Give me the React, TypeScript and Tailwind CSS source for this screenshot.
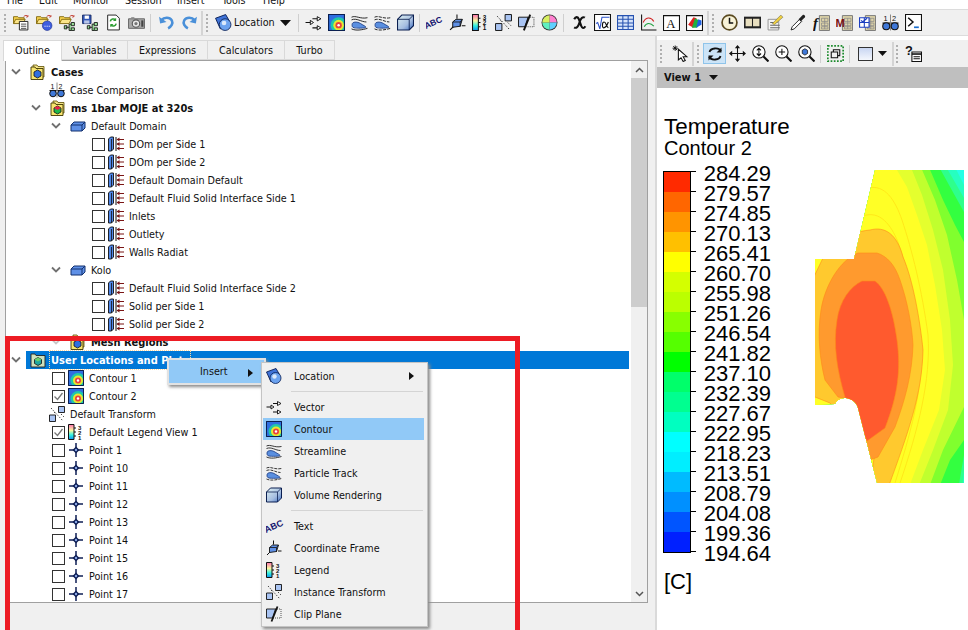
import type { ReactNode } from 'react';

const ui = 'font-["DejaVu_Sans_Condensed","DejaVu_Sans",sans-serif] [font-stretch:condensed] text-[10.7px] text-[#111]';

type SvgProps = { children: ReactNode; w?: number; h?: number };
function G({ children, w = 16, h = 16 }: SvgProps) {
  return (
    <svg width={w} height={h} viewBox="0 0 16 16" fill="none" className="block shrink-0">
      {children}
    </svg>
  );
}

const Folder = () => (
  <>
    <path d="M0.500 9V2.500h4l1 1h5v2" fill="#f6d24f" stroke="#7a6000" strokeWidth=".8" />
    <path d="M0.500 9l2-4h9l-2 4z" fill="#fbe58a" stroke="#7a6000" strokeWidth=".8" />
    <path d="M10 2.500c1.500-1.500 3-1.500 4 0l-1.500 0.500M14 2.500v-1.500" stroke="#c0392b" strokeWidth=".9" />
  </>
);
const Nodes = () => (
  <path d="M6.500 12.500h3m2-3h-2v6h2M5 11h2.500v3H5zM11.500 8h3v3h-3zM11.500 13h3v2.500h-3z" fill="#9be29b" stroke="#111" strokeWidth=".8" />
);
const OpenDoc = () => (
  <G>
    <Folder />
    <path d="M6 7h8v8H6z" fill="#fff" stroke="#222" strokeWidth=".9" />
    <path d="M7.500 9.500h5M7.500 11.500h5M7.500 13.500h5" stroke="#333" strokeWidth=".8" />
  </G>
);
const OpenCircle = () => (
  <G>
    <Folder />
    <circle cx="10.500" cy="11" r="4.500" fill="#3f5fe0" stroke="#1c2f90" strokeWidth=".6" />
    <path d="M8 11.500h5" stroke="#fff" strokeWidth=".9" strokeDasharray="1 1" />
  </G>
);
const OpenNodes = () => (
  <G>
    <Folder />
    <Nodes />
  </G>
);
const SaveNodes = () => (
  <G>
    <path d="M0.500 1h8v8h-8z" fill="#3459b8" stroke="#12245e" strokeWidth=".8" />
    <path d="M2.500 1.500h4v3h-4z" fill="#fff" />
    <path d="M2 6h5v3H2z" fill="#b9c6e8" />
    <Nodes />
  </G>
);
const RefreshDoc = () => (
  <G>
    <path d="M2.500 1h8l3 3v11h-11z" fill="#fff" stroke="#222" strokeWidth=".9" />
    <path d="M5 7c.5-2.500 3.500-3 5-1.500M10.500 9c-.5 2.500-3.500 3-5 1.500" stroke="#2f9e35" strokeWidth="1.500" />
    <path d="M10.500 3.500v3h-3zM5 12.500v-3h3z" fill="#2f9e35" />
  </G>
);
const Camera = () => (
  <G>
    <path d="M0.500 4.500h15v9h-15z" fill="#a8a8a8" stroke="#666" strokeWidth=".9" />
    <path d="M3 3h3v1.500H3z" fill="#888" />
    <circle cx="7.500" cy="9" r="3.500" fill="#e8e8e8" stroke="#555" />
    <circle cx="7.500" cy="9" r="1.500" fill="#777" />
    <path d="M12.500 6h2v6h-2z" fill="#444" />
  </G>
);
const Undo = ({ flip = false }: { flip?: boolean }) => (
  <G>
    <g transform={flip ? 'translate(16 0) scale(-1 1)' : undefined}>
      <path d="M3 6c3-3.500 8-3 10 0 1.500 3-.5 6-3.500 7.500" stroke="#4a90d9" strokeWidth="2.400" />
      <path d="M1 2.500l1 6.500 6-1.500z" fill="#4a90d9" />
    </g>
  </G>
);
const Loc = () => (
  <G>
    <path d="M0.500 4l9.500-3.500 3.500 6-8.500 7.500z" fill="#3f73d8" stroke="#0a1f55" strokeWidth=".9" />
    <circle cx="9.500" cy="10" r="5.500" fill="#6ba2ef" stroke="#0a1f55" strokeWidth=".8" />
    <circle cx="8.500" cy="8.500" r="2.200" fill="#dbe9fb" />
  </G>
);
const VectorI = () => (
  <G>
    <path d="M0.500 8h5M7 4.500h5M7 13h5" stroke="#111" strokeWidth="1.100" />
    <path d="M5 6v4l3-2zM11.500 2.500v4l3.500-2zM11.500 11v4l3.500-2z" fill="#fff" stroke="#111" strokeWidth=".9" />
  </G>
);
const ContourI = () => (
  <G>
    <path d="M0.500 0.500h15v15h-15z" fill="#2f6fe0" stroke="#0b1f50" />
    <circle cx="10" cy="10.500" r="7.500" fill="#1fc9a8" />
    <circle cx="10" cy="10.500" r="5" fill="#e8e830" />
    <circle cx="10" cy="10.500" r="3" fill="#e84040" />
    <circle cx="10" cy="10.500" r="1.200" fill="#fff" />
    <path d="M0.500 0.500h15v15h-15z" stroke="#0b1f50" />
  </G>
);
const StreamI = ({ dots = false }: { dots?: boolean }) => (
  <G>
    <path d="M0.500 3c4-2 8 2 15 .5M0.500 5.500c5-2 9 2 14 2M0.500 14c4 2 10 1 15-.5" stroke="#222" strokeWidth=".9" strokeDasharray={dots ? '3 1' : undefined} />
    <path d="M1 10c0-3 5-3 8-1s5 2.500 5 3.500-9 1-11 .5-2-1.500-2-3z" fill="#5a8fe0" stroke="#1c3a80" strokeWidth=".8" />
  </G>
);
const VolumeI = () => (
  <G>
    <defs>
      <linearGradient id="vol" x1="0" y1="0" x2="1" y2="1">
        <stop offset="0" stopColor="#dff1f2" />
        <stop offset=".6" stopColor="#a5bde0" />
        <stop offset="1" stopColor="#3c6cc0" />
      </linearGradient>
    </defs>
    <path d="M0.500 5l4-4h11v10l-4 4h-11z" fill="url(#vol)" stroke="#0b1f50" />
    <path d="M0.500 5h11v10M11.500 5l4-4" stroke="#0b1f50" strokeWidth=".8" />
  </G>
);
const AbcI = () => (
  <svg width="18" height="16" viewBox="0 0 18 16" className="block shrink-0">
    <text x="0" y="15" transform="rotate(-24 0 15)" fontFamily="'Liberation Sans', sans-serif" fontWeight="700" fontSize="9" fill="#14146e">
      ABC
    </text>
  </svg>
);
const CoordI = () => (
  <G>
    <path d="M1 15l3-3M7.500 0.500v4M12 11h3.500" stroke="#111" />
    <path d="M3.500 7.500l3-2.500h6l-2 6.500-7 1z" fill="#5f90e6" stroke="#111" strokeWidth=".9" />
    <path d="M3.500 7.500h7v4.500M10.500 7.500l2-2.500" stroke="#111" strokeWidth=".8" />
  </G>
);
const LegendI = () => (
  <G>
    <defs>
      <linearGradient id="leg" x1="0" y1="0" x2="0" y2="1">
        <stop offset="0" stopColor="#ff70b0" />
        <stop offset=".4" stopColor="#f8f8a0" />
        <stop offset=".7" stopColor="#30f0e0" />
        <stop offset="1" stopColor="#1090f0" />
      </linearGradient>
    </defs>
    <path d="M0.500 0.500h5.500v15H0.500z" fill="url(#leg)" stroke="#111" />
    <path d="M6 4h2M6 8h2M6 12h2" stroke="#111" />
    <text x="10" y="5.500" fontSize="6" fontWeight="700" fontFamily="'Liberation Sans', sans-serif" fill="#111">3</text>
    <text x="10" y="10.500" fontSize="6" fontWeight="700" fontFamily="'Liberation Sans', sans-serif" fill="#111">2</text>
    <text x="10" y="15.500" fontSize="6" fontWeight="700" fontFamily="'Liberation Sans', sans-serif" fill="#111">1</text>
  </G>
);
const InstanceI = () => (
  <G>
    <path d="M9.500 0.500h6v6h-6zM0.500 9h6v6.500h-6z" fill="#a9c4f3" stroke="#111" strokeWidth=".9" />
    <path d="M2 2l12 13M12 8l3 3M5 6l2 2" stroke="#333" strokeWidth=".9" strokeDasharray="1.500 1.500" />
  </G>
);
const ClipI = () => (
  <G>
    <path d="M9 3h6v9H7" stroke="#555" strokeDasharray="1 1" />
    <path d="M0.500 3h9l-3 9h-6z" fill="#a9c4f3" stroke="#111" strokeWidth=".9" />
    <path d="M11.500 0.500l-6 15" stroke="#111" strokeWidth="1.800" />
  </G>
);
const Wheel = () => (
  <G>
    <circle cx="8" cy="8" r="7.500" fill="#333" />
    <path d="M8 8V1.200A6.800 6.800 0 0 1 14.800 8z" fill="#ff80d0" />
    <path d="M8 8h6.800A6.800 6.800 0 0 1 8 14.800z" fill="#60d0ff" />
    <path d="M8 8v6.800A6.800 6.800 0 0 1 1.200 8z" fill="#60f0c0" />
    <path d="M8 8H1.200A6.800 6.800 0 0 1 8 1.200z" fill="#d8f060" />
  </G>
);
const ExprI = () => (
  <G>
    <path d="M3 5c1.500-3 3.500-2.500 4.500 0l2 6c1 2.500 2.500 3 4 .5M13 3.500c-2-1.500-4 1-5 4.500s-3 6-5 4.500" stroke="#111" strokeWidth="2" />
  </G>
);
const SqrtI = () => (
  <G>
    <path d="M0.500 0.500h15v15h-15z" fill="#fff" stroke="#111" />
    <path d="M2 9l1.500-1 2 6 2-11h7" stroke="#2a50c8" />
    <path d="M13.500 7.500c-1.500 4-3 5.500-4.500 5.500s-1.500-5.500.5-5.500 2 4.500 4 5.500" stroke="#111" strokeWidth="1.100" />
  </G>
);
const TableI = () => (
  <G>
    <path d="M0.500 1.500h15v13h-15z" fill="#d6e4fb" stroke="#2652b0" />
    <path d="M0.500 5h15M0.500 8.500h15M0.500 11.500h15M5.500 1.500v13M10.500 1.500v13" stroke="#2652b0" />
  </G>
);
const ChartI = () => (
  <G>
    <path d="M1.500 0.500v14.500h14" stroke="#111" />
    <path d="M3 8c2-5 7-6 10-1" stroke="#d02020" />
    <path d="M4 12c2-4 6-4 9-.5" stroke="#20a040" />
  </G>
);
const TextDoc = () => (
  <G>
    <path d="M0.500 1.500h15v14h-15z" fill="#fff" stroke="#111" />
    <text x="3" y="13" fontSize="12" fontFamily="'Liberation Serif', serif" fill="#111">A</text>
  </G>
);
const ColorDoc = () => (
  <G>
    <path d="M0.500 1.500h15v14h-15z" fill="#fff" stroke="#111" />
    <path d="M2 10l5-7 3 1-3 9z" fill="#e02020" />
    <path d="M5.500 13l3-9 4 2-2 7z" fill="#20b040" />
    <path d="M9.500 13l2-8 3 1v4z" fill="#2060e0" />
  </G>
);
const Clock = () => (
  <G>
    <circle cx="8" cy="8" r="7" fill="#f8f3d8" stroke="#5a4a20" strokeWidth="1.600" />
    <path d="M8 3.500V8.500h3.500" stroke="#111" strokeWidth="1.400" />
  </G>
);
const Film = () => (
  <G>
    <path d="M0 2.500h16v11H0z" fill="#222" />
    <path d="M1.500 4.500h6v7h-6zM8.500 4.500h6v7h-6z" fill="#e8dfc0" />
  </G>
);
const Note = () => (
  <G>
    <path d="M1 5h10v10H1z" fill="#f4f4f4" stroke="#888" strokeWidth=".8" />
    <path d="M3 8h7M3 10.500h9M3 13h9" stroke="#666" />
    <path d="M5 9l8-8 2 2-8 7z" fill="#f0d040" stroke="#665" strokeWidth=".5" />
  </G>
);
const Dropper = () => (
  <G>
    <path d="M1 15l1-3 7-7 2 2-7 7z" fill="#fff" stroke="#222" strokeWidth=".9" />
    <path d="M9 4l3-3c1-1 3 1 2 2l-3 3-1 1-2-2z" fill="#222" />
  </G>
);
const CalcBase = () => (
  <>
    <path d="M6 1.500h9.500v14H6z" fill="#ddd3a8" stroke="#777" strokeWidth=".9" />
    <path d="M8 4h6v3H8zM8 8.500h6v2.500H8zM8 12h6v2H8z" stroke="#888" strokeWidth=".7" />
    <path d="M11 4v10" stroke="#888" strokeWidth=".7" />
  </>
);
const FTable = () => (
  <G>
    <CalcBase />
    <text x="0" y="13" fontSize="14" fontStyle="italic" fontWeight="700" fontFamily="'Liberation Serif', serif" fill="#111">f</text>
  </G>
);
const MTable = () => (
  <G>
    <CalcBase />
    <text x="-0.500" y="12" fontSize="10.500" fontWeight="700" fontFamily="'Liberation Sans', sans-serif" fill="#7a1010">M</text>
  </G>
);
const CheckTable = () => (
  <G>
    <CalcBase />
    <path d="M0.500 3.500h9v9h-9z" fill="#fff" stroke="#1c3fc0" strokeWidth="1.100" />
    <path d="M0.500 8h9M5 3.500v9" stroke="#1c3fc0" />
    <path d="M2 6l1.500 1.500L7.500 4" stroke="#1c3fc0" strokeWidth="1.200" />
  </G>
);
const Compare = () => (
  <G>
    <text x="1.500" y="6.500" fontSize="7" fontFamily="'Liberation Sans', sans-serif" fill="#111">1</text>
    <text x="9.500" y="6.500" fontSize="7" fontFamily="'Liberation Sans', sans-serif" fill="#111">2</text>
    <path d="M8 0.500v15" stroke="#888" />
    <path d="M0.500 8.500h7M8.500 8.500h7" stroke="#111" strokeWidth="1.200" />
    <circle cx="4" cy="11.500" r="3.300" fill="#3f78d8" stroke="#111" />
    <circle cx="12" cy="11.500" r="3.300" fill="#3f78d8" stroke="#111" />
  </G>
);
const Terminal = () => (
  <G>
    <path d="M0.500 0.500h15v15h-15z" fill="#fff" stroke="#111" />
    <path d="M3 3.500l4.500 4L3 11.500" stroke="#111" strokeWidth="1.400" />
    <path d="M8.500 12.500H13" stroke="#1c6fd0" strokeWidth="1.600" />
  </G>
);
const Select = () => (
  <G>
    <path d="M0.500 3h5M3 0.500v5M1.200 1.200l3.600 3.600M4.800 1.200L1.200 4.800" stroke="#111" strokeWidth=".9" />
    <path d="M6 4v10l2.500-2 2 3.500 2-1-2-3.500h3.500z" fill="#fff" stroke="#111" />
  </G>
);
const Rotate = () => (
  <G>
    <path d="M2.500 6c1-4 9-5 11.500-1M13.500 10c-1 4-9 5-11.500 1" stroke="#111" strokeWidth="1.800" />
    <path d="M14.500 1.500v5h-5zM1.500 14.500v-5h5z" fill="#111" />
  </G>
);
const Pan = () => (
  <G>
    <path d="M8 1v14M1 8h14" stroke="#111" />
    <path d="M8 0l2.500 3h-5zM8 16l2.500-3h-5zM0 8l3-2.500v5zM16 8l-3-2.500v5z" fill="#111" />
  </G>
);
const Lens = ({ children }: { children?: ReactNode }) => (
  <G>
    <circle cx="6.500" cy="6.500" r="5.800" fill="#fff" stroke="#111" />
    <path d="M10.800 10.800l4.700 4.700" stroke="#111" strokeWidth="2" />
    {children}
  </G>
);
const Dotted = () => (
  <G>
    <path d="M0.800 0.800h14.400v14.400H0.800z" stroke="#1c8a2c" strokeWidth="1.600" strokeDasharray="1.600 1.400" />
    <path d="M4 6.500h6v5.500H4zM6 6.500V4.500h6v5.500h-2" stroke="#111" />
  </G>
);
const Help = () => (
  <G>
    <text x="0" y="9" fontSize="12" fontWeight="700" fontFamily="'Liberation Sans', sans-serif" fill="#111">?</text>
    <path d="M6.500 6.500h9v9h-9z" fill="#fff" stroke="#111" />
    <path d="M6.500 8.500h9" stroke="#111" strokeWidth="1.500" />
    <path d="M8 11h6M8 13h6" stroke="#111" />
  </G>
);
const CaseFolder = ({ color = '#2f6fe0', multi = false }: { color?: string; multi?: boolean }) => (
  <G>
    <path d="M3 1h4l1 1.500h6V13H3z" fill="#f2e389" stroke="#5a4d00" strokeWidth=".8" />
    <path d="M1 3h4l1 1.500h7v11H1z" fill="#f7e56e" stroke="#3f3600" strokeWidth=".9" />
    <path d="M4 8l3.500-2L11 8v4l-3.500 2L4 12z" fill={multi ? '#1fb84a' : color} stroke="#111" strokeWidth=".8" />
    {multi && <path d="M4 8l3.500-2L11 8l-3.500 2z" fill="#e8204a" />}
  </G>
);
const Slab = () => (
  <G>
    <path d="M1 7l3-3h11v6l-3 3H1z" fill="#5f90e6" stroke="#12306e" />
    <path d="M1 7h11v6M12 7l3-3" stroke="#12306e" />
  </G>
);
const Boundary = () => (
  <G>
    <path d="M0.500 3l2-2h3v12l-2 2h-3z" fill="#4f86e8" stroke="#111" strokeWidth=".9" />
    <path d="M3.500 3v12" stroke="#111" strokeWidth=".8" />
    <path d="M8 1v14" stroke="#111" />
    <path d="M9 3.500h7M9 8h7M9 12.500h7" stroke="#7a1515" />
    <path d="M8.500 3.500l3-2v4zM8.500 8l3-2v4zM8.500 12.500l3-2v4z" fill="#7a1515" />
  </G>
);
const PointI = () => (
  <G>
    <path d="M8 1v14M1 8h14" stroke="#0f1f55" strokeWidth="1.500" />
    <path d="M8 4.500L11.500 8 8 11.500 4.500 8z" fill="#0f1f55" />
    <circle cx="8" cy="8" r="1.200" fill="#8aa8e8" />
  </G>
);
const UserFolder = () => (
  <G>
    <path d="M1 2h4l1 1.500h9V15H1z" fill="#cfe0bc" stroke="#222" strokeWidth=".9" />
    <path d="M4.500 7.500L8 5.500l3.500 2v4L8 13.500l-3.500-2z" fill="#1fa8a0" stroke="#111" strokeWidth=".8" />
    <path d="M4.500 7.500L8 5.500l3.500 2L8 9.500z" fill="#6bd06b" />
  </G>
);

const Chevron = ({ faint = false }: { faint?: boolean }) => (
  <svg width="10" height="8" viewBox="0 0 10 8" fill="none" className="block shrink-0">
    <path d="M1 1.500l4 4 4-4" stroke={faint ? '#c8c8c8' : '#707070'} strokeWidth="1.800" />
  </svg>
);
const Checkbox = ({ on = false }: { on?: boolean }) => (
  <span className="flex h-[13px] w-[13px] shrink-0 items-center justify-center border border-[#333] bg-white mr-[3px]">
    {on && (
      <svg width="11" height="11" viewBox="0 0 11 11" fill="none">
        <path d="M1.500 5.500l3 3 5-6.500" stroke="#777" strokeWidth="1.300" />
      </svg>
    )}
  </span>
);

const Grip = () => <div className="h-[18px] w-[2px] shrink-0 border-l-2 border-dotted border-[#b0b0b0]" />;
const Tb = ({ children, className = 'mr-[6px]' }: { children: ReactNode; className?: string }) => (
  <div className={`flex h-[17px] w-[17px] shrink-0 items-center justify-center [&_svg]:h-[17px] [&_svg]:w-[17px] ${className}`}>{children}</div>
);
const Caret = () => (
  <svg width="11" height="6" viewBox="0 0 11 6" className="block shrink-0">
    <path d="M0 0h11L5.500 6z" fill="#111" />
  </svg>
);
const MenuArrow = () => (
  <svg width="5" height="8" viewBox="0 0 5 8" className="block shrink-0">
    <path d="M0 0l5 4-5 4z" fill="#111" />
  </svg>
);

type Row = {
  indent: string;
  chevron?: boolean;
  faint?: boolean;
  check?: boolean;
  on?: boolean;
  icon: ReactNode;
  text: string;
  bold?: boolean;
};

const boundary = (text: string): Row => ({ indent: 'pl-[86px]', check: true, icon: <Boundary />, text });
const point = (n: number): Row => ({ indent: 'pl-[46px]', check: true, icon: <PointI />, text: `Point ${n}` });

const topRows: Row[] = [
  { indent: 'pl-[5px]', chevron: true, icon: <CaseFolder />, text: 'Cases', bold: true },
  { indent: 'pl-[43px]', icon: <Compare />, text: 'Case Comparison' },
  { indent: 'pl-[25px]', chevron: true, icon: <CaseFolder multi />, text: 'ms 1bar MOJE at 320s', bold: true },
  { indent: 'pl-[45px]', chevron: true, icon: <Slab />, text: 'Default Domain' },
  boundary('DOm per Side 1'),
  boundary('DOm per Side 2'),
  boundary('Default Domain Default'),
  boundary('Default Fluid Solid Interface Side 1'),
  boundary('Inlets'),
  boundary('Outlety'),
  boundary('Walls Radiat'),
  { indent: 'pl-[45px]', chevron: true, icon: <Slab />, text: 'Kolo' },
  boundary('Default Fluid Solid Interface Side 2'),
  boundary('Solid per Side 1'),
  boundary('Solid per Side 2'),
  { indent: 'pl-[45px]', chevron: true, faint: true, icon: <CaseFolder />, text: 'Mesh Regions', bold: true },
];

const bottomRows: Row[] = [
  { indent: 'pl-[46px]', check: true, icon: <ContourI />, text: 'Contour 1' },
  { indent: 'pl-[46px]', check: true, on: true, icon: <ContourI />, text: 'Contour 2' },
  { indent: 'pl-[43px]', icon: <InstanceI />, text: 'Default Transform' },
  { indent: 'pl-[46px]', check: true, on: true, icon: <LegendI />, text: 'Default Legend View 1' },
  point(1),
  point(10),
  point(11),
  point(12),
  point(13),
  point(14),
  point(15),
  point(16),
  point(17),
];

function TreeRow({ row }: { row: Row }) {
  return (
    <div className={`flex h-[18px] items-center whitespace-nowrap ${row.indent}`}>
      {row.chevron && (
        <span className="mr-[9px]">
          <Chevron faint={row.faint} />
        </span>
      )}
      {row.check && <Checkbox on={row.on} />}
      <span className="mr-[5px]">{row.icon}</span>
      <span className={row.bold ? 'pt-[3px] text-[11px] font-bold' : 'pt-[3px]'}>{row.text}</span>
    </div>
  );
}

const tabs = [
  { label: 'Variables', w: 'w-[66px]' },
  { label: 'Expressions', w: 'w-[80px]' },
  { label: 'Calculators', w: 'w-[77px]' },
  { label: 'Turbo', w: 'w-[50px]' },
];

const menuBar = [
  { label: 'File', w: 'w-[32px]' },
  { label: 'Edit', w: 'w-[34px]' },
  { label: 'Monitor', w: 'w-[52px]' },
  { label: 'Session', w: 'w-[52px]' },
  { label: 'Insert', w: 'w-[45px]' },
  { label: 'Tools', w: 'w-[41px]' },
  { label: 'Help', w: 'w-[40px]' },
];

const bandColors = [
  'bg-[#ff2a00]', 'bg-[#ff6600]', 'bg-[#ff9400]', 'bg-[#ffc000]', 'bg-[#ffff00]',
  'bg-[#d4ff00]', 'bg-[#bbff00]', 'bg-[#88ff00]', 'bg-[#55ff00]', 'bg-[#00ff00]',
  'bg-[#00ff6a]', 'bg-[#00ff90]', 'bg-[#00ffc0]', 'bg-[#00ffff]', 'bg-[#00eeff]',
  'bg-[#00bbff]', 'bg-[#0090ff]', 'bg-[#0055ff]', 'bg-[#0020ff]',
];
const legendValues = [
  '284.29', '279.57', '274.85', '270.13', '265.41', '260.70', '255.98', '251.26', '246.54', '241.82',
  '237.10', '232.39', '227.67', '222.95', '218.23', '213.51', '208.79', '204.08', '199.36', '194.64',
];

const menuGroups: { icon: ReactNode; label: string; arrow?: boolean; active?: boolean }[][] = [
  [{ icon: <Loc />, label: 'Location', arrow: true }],
  [
    { icon: <VectorI />, label: 'Vector' },
    { icon: <ContourI />, label: 'Contour', active: true },
    { icon: <StreamI />, label: 'Streamline' },
    { icon: <StreamI dots />, label: 'Particle Track' },
    { icon: <VolumeI />, label: 'Volume Rendering' },
  ],
  [
    { icon: <AbcI />, label: 'Text' },
    { icon: <CoordI />, label: 'Coordinate Frame' },
    { icon: <LegendI />, label: 'Legend' },
    { icon: <InstanceI />, label: 'Instance Transform' },
    { icon: <ClipI />, label: 'Clip Plane' },
  ],
];

// contour bands, painted outside in, clipped to the part outline (page coords minus 815,170)
const plotBands: { fill: string; d: string }[] = [
  { fill: '#26ffc0', d: 'M139 -5 L149 15 L160 20 L160 320 L-30 320 L-30 -5 Z' },
  { fill: '#2eff8c', d: 'M130 -5 L149 28 L160 35 L160 280 L149 300 L147 320 L-30 320 L-30 -5 Z' },
  { fill: '#33ff40', d: 'M123 -5 L134 15 L149 42 L160 50 L160 260 L149 285 L143 320 L-30 320 L-30 -5 Z' },
  { fill: '#80ff2e', d: 'M113 -5 L128 30 L140 55 L149 72 L160 80 L160 230 L149 270 L135 290 L123 320 L-30 320 L-30 -5 Z' },
  { fill: '#c0ff2e', d: 'M105 -5 L120 30 L132 65 L142 110 L149 150 L155 195 L149 237 L128 280 L113 320 L-30 320 L-30 -5 Z' },
  { fill: '#e4ff2e', d: 'M95 -5 L107 25 L118 60 L128 100 L135 150 L138 195 L133 240 L118 280 L102 320 L-30 320 L-30 -5 Z' },
  { fill: '#ffff26', d: 'M79 -5 L92 17 L102 45 L112 75 L120 115 L127 160 L130 200 L124 240 L108 280 L93 320 L-30 320 L-30 -5 Z' },
];
const hotBands: { fill: string; d: string }[] = [
  { fill: '#ffc92e', d: 'M55 60 C70 56 82 64 88 87 C98 110 105 150 108 180 C107 225 93 263 73 318 L55 320 L60 280 L15 233 L-5 225 L-5 115 L7 90 C15 80 30 62 55 60 Z' },
  { fill: '#ff9a2e', d: 'M43 83 L62 83 C72 86 80 95 85 110 C92 130 97 155 98 175 C97 205 90 230 80 257 L63 287 L55 290 L40 230 L23 227 L10 210 C5 190 2 165 6 140 C10 115 25 90 43 83 Z' },
  { fill: '#ff5a2e', d: 'M47 111 L60 111 C70 118 78 140 82 170 C86 200 83 225 70 258 L52 271 L30 227 C22 200 18 175 22 150 C25 130 35 117 47 111 Z' },
];
const yellowLines = [
  'M53 18 C70 14 80 30 87 50 C97 80 107 120 113 165 C116 210 103 260 85 313',
  'M48 46 C65 40 76 55 83 72 C93 100 103 140 107 175 C108 220 95 265 80 313',
];

export default function App() {
  return (
    <div className={`relative h-[630px] w-[968px] overflow-hidden bg-white ${ui}`}>
      {/* menu bar, cut off by the screenshot */}
      <div className="h-[9px] overflow-hidden pl-[7px]">
        <div className="-mt-[6px] flex leading-[14px]">
          {menuBar.map(m => (
            <span key={m.label} className={m.w}>{m.label}</span>
          ))}
        </div>
      </div>

      {/* main toolbar */}
      <div className="flex h-[27px] items-center border-y border-[#dcdcdc] bg-[#f0f0f0] pl-[4px]">
        <Grip />
        <div className="w-[7px]" />
        <Tb><OpenDoc /></Tb>
        <Tb><OpenCircle /></Tb>
        <Tb><OpenNodes /></Tb>
        <Tb><SaveNodes /></Tb>
        <Tb><RefreshDoc /></Tb>
        <Tb><Camera /></Tb>
        <div className="-ml-px mr-[7px] h-[18px] w-px bg-[#cfcfcf]" />
        <Tb><Undo /></Tb>
        <Tb className="mr-[3px]"><Undo flip /></Tb>
        <div className="mr-[3px] h-[24px] w-[2px] bg-[#d4d4d4]" />
        <Grip />
        <div className="w-[7px]" />
        <Tb className="mr-[2px]"><Loc /></Tb>
        <span className="mr-[6px] w-[40px] pt-px">Location</span>
        <div className="mr-[7px]"><Caret /></div>
        <div className="mr-[6px] h-[18px] w-px bg-[#cfcfcf]" />
        <Tb><VectorI /></Tb>
        <Tb><ContourI /></Tb>
        <Tb><StreamI /></Tb>
        <Tb><StreamI dots /></Tb>
        <Tb><VolumeI /></Tb>
        <div className="-ml-px mr-[6px] h-[18px] w-px bg-[#cfcfcf]" />
        <Tb><AbcI /></Tb>
        <Tb><CoordI /></Tb>
        <Tb><LegendI /></Tb>
        <Tb><InstanceI /></Tb>
        <Tb><ClipI /></Tb>
        <Tb><Wheel /></Tb>
        <div className="-ml-px mr-[7px] h-[18px] w-px bg-[#cfcfcf]" />
        <Tb><ExprI /></Tb>
        <Tb><SqrtI /></Tb>
        <Tb><TableI /></Tb>
        <Tb><ChartI /></Tb>
        <Tb><TextDoc /></Tb>
        <Tb><ColorDoc /></Tb>
        <div className="-ml-[2px] mr-[3px] h-[24px] w-[2px] bg-[#d4d4d4]" />
        <Grip />
        <div className="w-[7px]" />
        <Tb><Clock /></Tb>
        <Tb><Film /></Tb>
        <Tb><Note /></Tb>
        <Tb><Dropper /></Tb>
        <Tb><FTable /></Tb>
        <Tb><MTable /></Tb>
        <Tb><CheckTable /></Tb>
        <Tb><Compare /></Tb>
        <Tb><Terminal /></Tb>
      </div>

      <div className="flex h-[594px]">
        {/* left panel: outline tree */}
        <div className="flex h-full w-[655px] shrink-0 flex-col bg-[#f0f0f0] pt-[4px]">
          <div className="flex h-[20px] pl-[3px]">
            <div className="z-10 flex h-[21px] w-[59px] items-center justify-center border border-b-0 border-[#d9d9d9] bg-white pt-px">Outline</div>
            {tabs.map(t => (
              <div key={t.label} className={`flex h-[20px] items-center justify-center border border-l-0 border-[#d9d9d9] pt-[2px] ${t.w}`}>
                {t.label}
              </div>
            ))}
          </div>
          <div className="ml-[5px] flex h-[543px] w-[643px] border border-[#a0a0a0] bg-white">
            <div className="min-w-0 flex-1 pt-[2px]">
              {topRows.map(r => (
                <TreeRow key={r.text} row={r} />
              ))}
              <div className="flex h-[18px] items-center pl-[5px] pr-[2px] whitespace-nowrap">
                <span className="mr-[5px]"><Chevron /></span>
                <div className="flex h-full flex-1 items-center bg-[#0078d7] pl-[4px]">
                  <UserFolder />
                  <span className="ml-[3px] border border-dotted border-[#ffd9a0] px-px pt-[2px] text-[11px] font-bold text-white">User Locations and Plots</span>
                </div>
              </div>
              {bottomRows.map(r => (
                <TreeRow key={r.text} row={r} />
              ))}
            </div>
            <div className="flex w-[16px] shrink-0 flex-col bg-[#f0f0f0]">
              <div className="flex h-[17px] items-center justify-center">
                <svg width="9" height="6" viewBox="0 0 9 6" fill="none"><path d="M1 5l3.500-3.500L8 5" stroke="#555" strokeWidth="1.500" /></svg>
              </div>
              <div className="h-[229px] bg-[#cdcdcd]" />
              <div className="flex-1" />
              <div className="flex h-[17px] items-center justify-center">
                <svg width="9" height="6" viewBox="0 0 9 6" fill="none"><path d="M1 1l3.500 3.500L8 1" stroke="#555" strokeWidth="1.500" /></svg>
              </div>
            </div>
          </div>
        </div>

        <div className="h-full w-[2px] shrink-0 bg-[#dadada]" />

        {/* right panel: view */}
        <div className="flex min-w-0 flex-1 flex-col pt-[4px]">
          <div className="flex h-[27px] items-center bg-[#f0f0f0] pl-[3px]">
            <Grip />
            <div className="w-[10px]" />
            <Tb className="mr-[3px]"><Select /></Tb>
            <div className="mr-[3px] h-[24px] w-[2px] bg-[#d4d4d4]" />
            <Grip />
            <div className="w-[4px]" />
            <div className="mr-[3px] flex h-[21px] w-[23px] items-center justify-center border border-[#8fc4ea] bg-[#cce4f7]">
              <Rotate />
            </div>
            <Tb><Pan /></Tb>
            <Tb>
              <Lens>
                <path d="M6.500 3v7M4.500 5l2-2 2 2M4.500 8l2 2 2-2" stroke="#111" />
              </Lens>
            </Tb>
            <Tb>
              <Lens>
                <path d="M6.500 3.500v6M3.500 6.500h6" stroke="#111" />
              </Lens>
            </Tb>
            <Tb className="mr-[5px]">
              <Lens>
                <path d="M4 5l2.500-1.500L9 5v3L6.500 9.500 4 8z" fill="#3f78d8" stroke="#111" strokeWidth=".7" />
              </Lens>
            </Tb>
            <div className="mr-[6px] h-[18px] w-px bg-[#cfcfcf]" />
            <Tb className="mr-[5px]"><Dotted /></Tb>
            <div className="mr-[8px] h-[18px] w-px bg-[#cfcfcf]" />
            <div className="mr-[5px] h-[14px] w-[15px] border border-[#333] bg-gradient-to-b from-[#c9d6f2] to-[#f4f7fd]" />
            <div className="mr-[5px]">
              <svg width="9" height="5" viewBox="0 0 9 5" className="block"><path d="M0 0h9L4.500 5z" fill="#111" /></svg>
            </div>
            <div className="mr-[2px] h-[24px] w-[2px] bg-[#d4d4d4]" />
            <Grip />
            <div className="w-[7px]" />
            <Tb><Help /></Tb>
          </div>
          <div className="flex h-[21px] items-center bg-[#bfbfbf] pl-[7px] text-[11px] font-bold">
            <span className="mr-[8px] pt-[2px]">View 1</span>
            <svg width="9" height="5" viewBox="0 0 9 5" className="block"><path d="M0 0h9L4.500 5z" fill="#111" /></svg>
          </div>

          <div className="flex pl-[6px] font-['Liberation_Sans',sans-serif] [font-stretch:normal] text-[22px] leading-[22px] text-black">
            <div className="w-[152px] shrink-0 pt-[28px]">
              <div className="pl-px text-[22.4px]">Temperature</div>
              <div className="pl-px text-[20px] leading-[20px]">Contour 2</div>
              <div className="mt-[13px] flex">
                <div className="relative h-[382px] w-[33px] shrink-0">
                  <div className="flex h-full w-[28px] flex-col border border-black">
                    {bandColors.map(c => (
                      <div key={c} className={`h-[20px] ${c}`} />
                    ))}
                  </div>
                  <div className="absolute left-[28px] top-0 flex flex-col">
                    {legendValues.map(v => (
                      <div key={v} className="h-[20px] w-[5px] border-t border-black" />
                    ))}
                  </div>
                </div>
                <div className="-mt-[7px] ml-[7px] w-[68px]">
                  {legendValues.map(v => (
                    <div key={v} className="h-[20px] text-right leading-[20px]">{v}</div>
                  ))}
                </div>
              </div>
              <div className="mt-[7px] pl-px">[C]</div>
            </div>
            <svg width="149" height="313" viewBox="0 0 149 313" className="mt-[82px] block shrink-0">
              <defs>
                <clipPath id="part">
                  <path d="M60 0 L39 89 L0 89 L0 235 L20 234 C22 229 27 228 31 228 C37 229 42 233 43 238 L62 313 L149 313 L149 0 Z" />
                </clipPath>
              </defs>
              <g clipPath="url(#part)">
                <rect width="149" height="313" fill="#26ffe6" />
                {plotBands.map(b => (
                  <path key={b.fill} d={b.d} fill={b.fill} />
                ))}
                {yellowLines.map(d => (
                  <path key={d} d={d} fill="none" stroke="#ffe81a" />
                ))}
                {hotBands.map(b => (
                  <path key={b.fill} d={b.d} fill={b.fill} stroke="#ff8a1a" strokeWidth=".6" />
                ))}
              </g>
            </svg>
          </div>
        </div>
      </div>

      {/* context menu */}
      <div className="absolute left-[167px] top-[358px] h-[27px] w-[99px] border-2 border-[#e2e2e2] bg-[#91c9f7] shadow-[2px_2px_3px_#8a8a8a]">
        <div className="flex h-full items-center pl-[31px] pt-[2px]">
          <span className="w-[48px]">Insert</span>
          <MenuArrow />
        </div>
      </div>
      <div className="absolute left-[261px] top-[362px] h-[265px] w-[167px] border border-[#c4c4c4] bg-[#f0f0f0] p-px pt-[2px] shadow-[2px_2px_3px_#8a8a8a]">
        {menuGroups.map((group, gi) => (
          <div key={gi}>
            {gi > 0 && (
              <div className="flex h-[9px] items-center pl-[28px] pr-[3px]">
                <div className="h-px w-full bg-[#d4d4d4]" />
              </div>
            )}
            {group.map(item => (
              <div key={item.label} className={`mr-[2px] flex h-[22px] items-center pl-[3px] ${item.active ? 'bg-[#91c9f7]' : ''}`}>
                <span className="mr-[12px] w-[16px]">{item.icon}</span>
                <span className="w-[115px] pt-[3px]">{item.label}</span>
                {item.arrow && <MenuArrow />}
              </div>
            ))}
          </div>
        ))}
      </div>

      {/* red annotation drawn on the screenshot */}
      <div className="pointer-events-none absolute left-[5px] top-[336px] h-[320px] w-[515px] border-[5px] border-[#ed1c24]" />
    </div>
  );
}
